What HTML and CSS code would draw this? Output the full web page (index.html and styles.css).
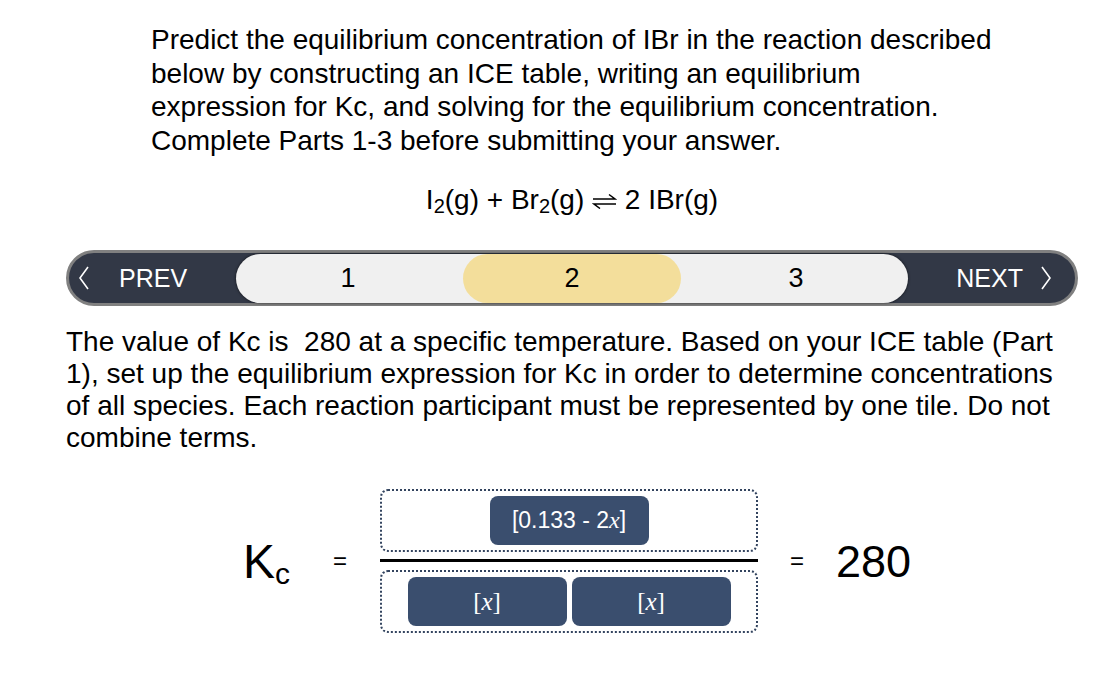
FILE: index.html
```html
<!DOCTYPE html>
<html>
<head>
<meta charset="utf-8">
<link rel="stylesheet" href="styles.css">
</head>
<body>
<div class="page">
  <p class="intro">Predict the equilibrium concentration of IBr in the reaction described below by constructing an ICE table, writing an equilibrium expression for Kc, and solving for the equilibrium concentration. Complete Parts 1-3 before submitting your answer.</p>
  <div class="reaction">I<sub>2</sub>(g) + Br<sub>2</sub>(g) <svg class="arrows" width="25" height="16" viewBox="0 0 25 16"><path d="M1 6H23L17 1.5M24 11H2L8 15.5" fill="none" stroke="#000" stroke-width="1.5"/></svg> 2 IBr(g)</div>

  <div class="nav">
    <div class="nav-btn prev">
      <svg class="chev" width="12" height="24" viewBox="0 0 12 24"><polyline points="10,1 2,12 10,23" fill="none" stroke="#fff" stroke-width="1.6"/></svg>
      <span>PREV</span>
    </div>
    <div class="steps">
      <div class="step">1</div>
      <div class="step active">2</div>
      <div class="step">3</div>
    </div>
    <div class="nav-btn next">
      <span>NEXT</span>
      <svg class="chev" width="12" height="24" viewBox="0 0 12 24"><polyline points="2,1 10,12 2,23" fill="none" stroke="#fff" stroke-width="1.6"/></svg>
    </div>
  </div>

  <p class="question">The value of Kc is&nbsp; 280 at a specific temperature. Based on your ICE table (Part 1), set up the equilibrium expression for Kc in order to determine concentrations of all species. Each reaction participant must be represented by one tile. Do not combine terms.</p>

  <div class="expr">
    <div class="kc">K<span class="kc-sub">c</span></div>
    <div class="eq eq-left">=</div>
    <div class="fraction">
      <div class="drop">
        <div class="tile">[0.133 - 2<i>x</i>]</div>
      </div>
      <div class="bar"></div>
      <div class="drop">
        <div class="tile tile-serif">[<i>x</i>]</div>
        <div class="tile tile-serif">[<i>x</i>]</div>
      </div>
    </div>
    <div class="eq eq-right">=</div>
    <div class="value">280</div>
  </div>
</div>
</body>
</html>
```

FILE: styles.css
```css
html, body {
  margin: 0;
  padding: 0;
  background: #fff;
}
body {
  font-family: "Liberation Sans", Arial, sans-serif;
  color: #000;
}
.page {
  width: 1012px;
  margin-left: 66px;
  padding-top: 23px;
}
.intro {
  margin: 0 0 0 85px;
  width: 850px;
  font-size: 28px;
  line-height: 33.6px;
}
.reaction {
  margin-top: 26px;
  text-align: center;
  font-size: 28px;
  line-height: 34px;
}
.reaction sub {
  font-size: 20px;
  line-height: 0;
  vertical-align: -4px;
}
.arrows {
  display: inline-block;
  vertical-align: 0;
}
.nav {
  margin-top: 33px;
  height: 50px;
  border: 3px solid #808080;
  border-radius: 30px;
  background: #323846;
  display: flex;
  align-items: center;
}
.nav-btn {
  width: 167px;
  height: 50px;
  display: flex;
  align-items: center;
  color: #fff;
  font-size: 25px;
}
.prev {
  padding-left: 9px;
  box-sizing: border-box;
  gap: 29px;
}
.next {
  justify-content: flex-end;
  padding-right: 23px;
  box-sizing: border-box;
  gap: 17px;
}
.chev {
  display: block;
}
.steps {
  flex: 1;
  height: 49px;
  border-radius: 25px;
  background: #f0f0f0;
  box-shadow: 0 0 3px rgba(0, 0, 0, 0.7);
  display: grid;
  grid-template-columns: 1fr 1fr 1fr;
}
.step {
  display: flex;
  align-items: center;
  justify-content: center;
  font-size: 27px;
  border-radius: 25px;
}
.step.active {
  background: #f3de9b;
  margin: 0 3px;
}
.question {
  margin: 20px 0 0 0;
  width: 1000px;
  font-size: 28px;
  line-height: 32px;
}
.expr {
  margin-top: 35px;
  display: flex;
  align-items: center;
  padding-left: 177px;
}
.kc {
  font-size: 48px;
  line-height: 50px;
  width: 50px;
  margin-top: 2px;
}
.kc-sub {
  font-size: 30px;
  vertical-align: -6px;
  line-height: 0;
}
.eq {
  font-size: 24px;
}
.eq-left {
  margin-left: 40px;
}
.fraction {
  margin-left: 33px;
  width: 378px;
  display: flex;
  flex-direction: column;
}
.drop {
  height: 63px;
  box-sizing: border-box;
  border: 2px dotted #33445f;
  border-radius: 8px;
  display: flex;
  align-items: center;
  justify-content: center;
  gap: 5px;
}
.bar {
  height: 3px;
  background: #000;
  margin: 7px 0 8px;
}
.tile {
  width: 159px;
  height: 49px;
  border-radius: 8px;
  background: #3a4e6e;
  color: #fff;
  font-size: 23px;
  display: flex;
  align-items: center;
  justify-content: center;
}
.tile i {
  font-family: "Liberation Serif", "Times New Roman", serif;
  font-size: 24px;
}
.tile-serif {
  font-family: "Liberation Serif", "Times New Roman", serif;
  font-size: 25px;
}
.tile-serif i {
  font-size: 25px;
}
.eq-right {
  margin-left: 32px;
}
.value {
  margin-left: 32px;
  font-size: 45px;
  margin-top: 2px;
}
```
